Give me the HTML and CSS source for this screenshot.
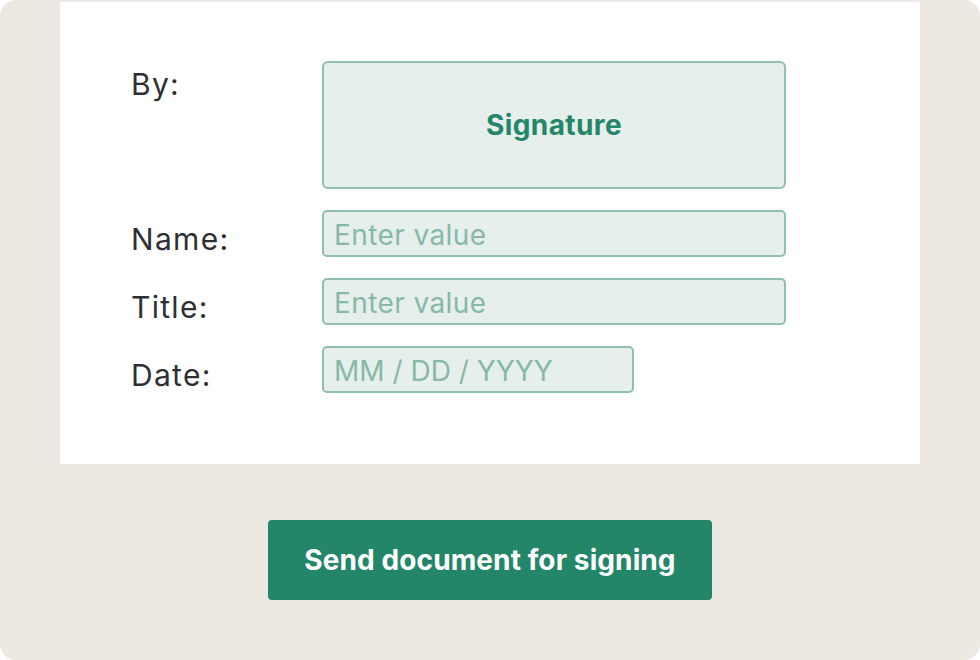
FILE: index.html
```html
<!DOCTYPE html>
<html>
<head>
<meta charset="utf-8">
<link rel="stylesheet" href="styles.css">
</head>
<body>
<div class="frame">
  <div class="card">
    <div class="form">
      <div class="label label-by">By:</div>
      <div class="sig">Signature</div>
      <div class="label">Name:</div>
      <div class="input">Enter value</div>
      <div class="label">Title:</div>
      <div class="input">Enter value</div>
      <div class="label">Date:</div>
      <div class="input input-date">MM / DD / YYYY</div>
    </div>
  </div>
  <div class="actions">
    <button class="send">Send document for signing</button>
  </div>
</div>
</body>
</html>
```

FILE: styles.css
```css
html, body {
  margin: 0;
  padding: 0;
  background: #ffffff;
}
body {
  font-family: Inter, "Noto Sans", sans-serif;
}
.frame {
  width: 980px;
  height: 660px;
  box-sizing: border-box;
  background: #ede9e2;
  border-radius: 16px;
  padding-top: 2px;
  display: flex;
  flex-direction: column;
  align-items: center;
}
.card {
  width: 860px;
  height: 462px;
  background: #ffffff;
  box-sizing: border-box;
  padding: 59px 0 0 71px;
}
.form {
  display: grid;
  grid-template-columns: 191px 464px;
  row-gap: 21px;
  align-items: center;
}
.label {
  font-size: 30px;
  letter-spacing: 1.3px;
  color: #2d2f33;
  line-height: 34px;
  padding-top: 11px;
}
.label-by {
  align-self: start;
  padding-top: 6px;
}
.sig {
  height: 128px;
  box-sizing: border-box;
  border: 2px solid #8fbfae;
  border-radius: 6px;
  background: #e6efec;
  display: flex;
  align-items: center;
  justify-content: center;
  font-size: 28px;
  letter-spacing: 0.4px;
  font-weight: 700;
  color: #238669;
}
.input {
  height: 47px;
  box-sizing: border-box;
  border: 2px solid #8fbfae;
  border-radius: 5px;
  background: #e6efec;
  display: flex;
  align-items: center;
  padding-left: 10px;
  padding-top: 2px;
  font-size: 28px;
  letter-spacing: 0.4px;
  color: #86b9a8;
}
.input-date {
  width: 312px;
  letter-spacing: 0;
}
.actions {
  flex: 1;
  display: flex;
  align-items: center;
  justify-content: center;
  padding-bottom: 4px;
}
.send {
  width: 444px;
  height: 80px;
  border: none;
  border-radius: 4px;
  background: #238669;
  color: #ffffff;
  font-family: Inter, "Noto Sans", sans-serif;
  font-size: 28px;
  letter-spacing: 0.1px;
  font-weight: 700;
  cursor: pointer;
}
```
